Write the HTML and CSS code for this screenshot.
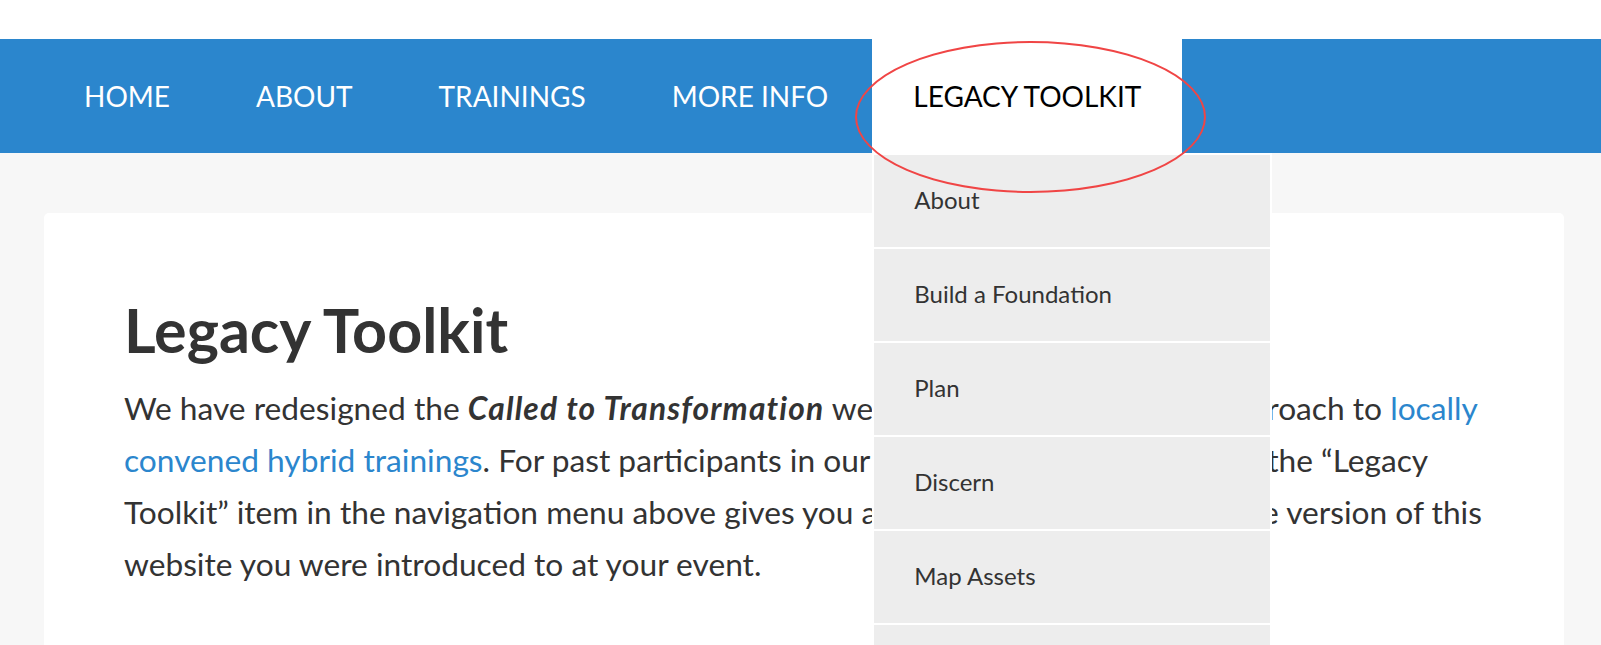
FILE: index.html
```html
<!DOCTYPE html>
<html lang="en">
<head>
  <meta charset="UTF-8" />
  <meta name="viewport" content="width=device-width, initial-scale=1.0" />
  <title>Legacy Toolkit</title>
  <link rel="stylesheet" href="styles.css">
</head>
<body>
  <div class="topbar"></div>

  <nav class="nav">
    <ul class="menu">
      <li><a href="#">HOME</a></li>
      <li><a href="#">ABOUT</a></li>
      <li><a href="#">TRAININGS</a></li>
      <li><a href="#">MORE INFO</a></li>
      <li class="active">
        <a href="#">LEGACY TOOLKIT</a>
        <ul class="dropdown">
          <li><a href="#">About</a></li>
          <li><a href="#">Build a Foundation</a></li>
          <li><a href="#">Plan</a></li>
          <li><a href="#">Discern</a></li>
          <li><a href="#">Map Assets</a></li>
          <li><a href="#">Act</a></li>
        </ul>
        <span class="highlight"></span>
      </li>
    </ul>
  </nav>

  <main class="page">
    <article class="card">
      <h1>Legacy Toolkit</h1>
      <p>
        We have redesigned the <strong><em>Called to Transformation</em></strong> website to reflect our fresh approach to
        <a href="#">locally convened hybrid trainings</a>. For past participants in our previous in-person retreats, the &ldquo;Legacy
        Toolkit&rdquo; item in the navigation menu above gives you access to a free downloadable version of this
        website you were introduced to at your event.
      </p>
    </article>
  </main>
</body>
</html>
```

FILE: styles.css
```css
* {
  box-sizing: border-box;
  margin: 0;
  padding: 0;
}
html, body {
  height: 100%;
  overflow: hidden;
}
body {
  font-family: Lato, 'Open Sans', sans-serif;
  background: #f7f7f7;
  color: #333;
}
a {
  text-decoration: none;
  color: inherit;
}
.topbar {
  height: 39px;
  background: #fff;
}
.nav {
  background: #2b86cd;
  height: 114px;
}
.menu {
  list-style: none;
  display: flex;
  height: 100%;
  padding-left: 41px;
}
.menu > li {
  position: relative;
  display: flex;
  align-items: center;
}
.menu > li > a {
  display: block;
  padding: 0 43px;
  color: #fff;
  font-size: 28px;
  line-height: 114px;
}
.menu > li.active {
  background: #fff;
  margin-left: 1px;
}
.menu > li.active > a {
  color: #000;
  padding: 0 41px;
}
.dropdown {
  list-style: none;
  position: absolute;
  top: 100%;
  left: 0;
  width: 400px;
  background: #fff;
  border: 2px solid #fff;
  display: flex;
  flex-direction: column;
  gap: 2px;
  z-index: 5;
}
.dropdown li {
  background: #ededed;
}
.dropdown a {
  display: block;
  padding: 29px 40px 31px;
  font-size: 24px;
  line-height: 32px;
  color: #333;
}
.highlight {
  position: absolute;
  left: -17px;
  top: 2px;
  width: 351px;
  height: 152px;
  border: 2px solid #f04545;
  border-radius: 50%;
  z-index: 6;
  pointer-events: none;
}
.page {
  padding: 60px 37px 0 44px;
}
.card {
  background: #fff;
  border-radius: 5px;
  padding: 80px 70px 80px 80px;
  min-height: 600px;
}
.card h1 {
  font-size: 61px;
  font-weight: 700;
  line-height: 1.2;
  color: #333;
  margin-bottom: 16px;
}
.card p {
  font-size: 31.7px;
  line-height: 52px;
  color: #333;
}
.card p strong {
  font-weight: 700;
  letter-spacing: 1.15px;
}
.card p a {
  color: #2b86cd;
}
```
